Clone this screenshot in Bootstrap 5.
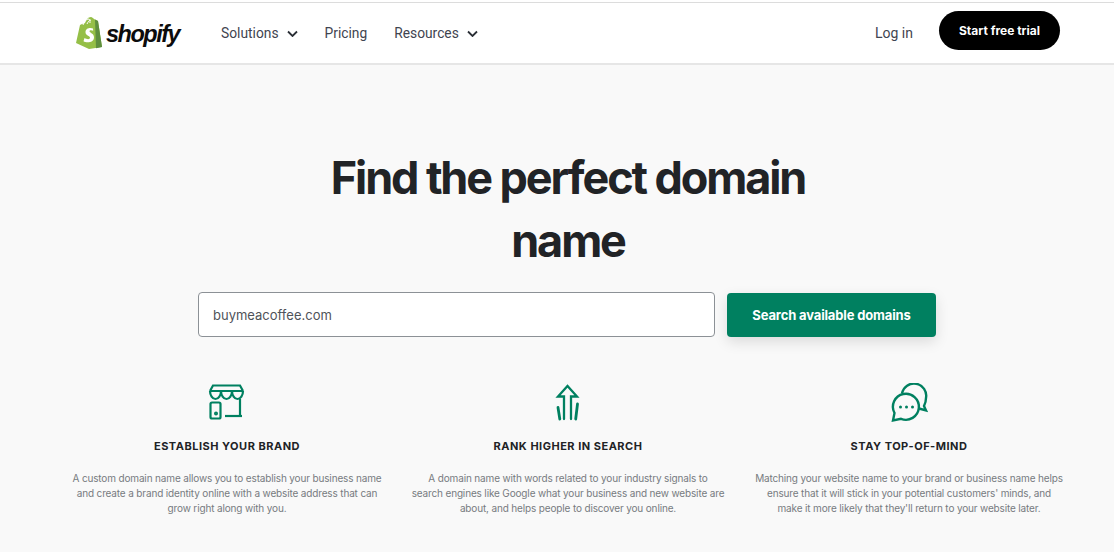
<!DOCTYPE html>
<html lang="en">
<head>
  <meta charset="UTF-8" />
  <meta name="viewport" content="width=device-width, initial-scale=1">
  <title>Find the perfect domain name - Shopify</title>
  <link href="https://cdn.jsdelivr.net/npm/bootstrap@5.3.0/dist/css/bootstrap.min.css" rel="stylesheet">
  <style>
    body {
      background: #f9f9f9;
      font-family: "Inter", "Liberation Sans", sans-serif;
      color: #212326;
      height: 552px;
      overflow: hidden;
    }
    .top-line {
      height: 3px;
      background: #fff;
      border-bottom: 1px solid #dcdcdc;
    }
    .site-header {
      height: 62px;
      background: #fff;
      border-bottom: 2px solid #e6e6e6;
      padding: 0 54px 0 75px;
    }
    .brand-box {
      width: 146px;
      gap: 3px;
      text-decoration: none;
    }
    .brand-word {
      font-family: "Liberation Sans", sans-serif;
      font-weight: 700;
      font-style: italic;
      font-size: 23.5px;
      letter-spacing: -1.5px;
      color: #0c0c0c;
      line-height: 1;
      margin-top: 3px;
    }
    .site-nav {
      gap: 27px;
      font-family: "Roboto", sans-serif;
      font-size: 13.8px;
      margin-top: 1px;
    }
    .site-nav a, .login-link {
      color: #3f4450;
      text-decoration: none;
    }
    .login-link {
      font-family: "Roboto", sans-serif;
      font-size: 14px;
      margin-right: 26px;
      margin-top: 1px;
    }
    .trial-btn {
      width: 121px;
      height: 39px;
      border-radius: 20px;
      background: #000;
      color: #fff;
      font-size: 12px;
      font-weight: 700;
      border: 0;
      padding: 0;
      margin-bottom: 5px;
    }
    .hero-title {
      font-family: "Inter", sans-serif;
      font-weight: 700;
      font-size: 45px;
      line-height: 63px;
      letter-spacing: -2.1px;
      width: 520px;
      margin: 81px 0 0 308px;
      color: #212326;
    }
    .search-row {
      width: 738px;
      margin: 20px auto 0 198px;
      gap: 12px;
      align-items: center;
    }
    .domain-input {
      width: 517px;
      height: 45px;
      border: 1px solid #8c9196;
      border-radius: 4px;
      background: #fff;
      padding: 0 14px;
      font-family: "Inter", sans-serif;
      font-size: 13px;
      color: #4f5359;
    }
    .search-btn {
      width: 209px;
      height: 44px;
      background: #008060;
      color: #fff;
      border: 0;
      border-radius: 4px;
      font-size: 13px;
      font-weight: 700;
      letter-spacing: -0.15px;
      padding: 2px 0 0;
      box-shadow: 0 5px 14px rgba(0, 0, 0, .12);
    }
    .feature-row {
      margin: 46px 0 0 70px;
      gap: 27px;
    }
    .feature-item {
      width: 314px;
      text-align: center;
    }
    .feature-icon {
      display: block;
      width: 40px;
      height: 40px;
      margin: 0 auto;
    }
    .feature-title {
      font-size: 11px;
      font-weight: 700;
      letter-spacing: 0.5px;
      line-height: 14px;
      margin: 16px 0 18px;
      color: #212326;
    }
    .feature-text {
      font-size: 10px;
      letter-spacing: -0.15px;
      line-height: 15px;
      color: #777b80;
      margin: 0;
    }
  </style>
</head>
<body>

<div class="top-line"></div>
<header class="site-header d-flex align-items-center">
  <a class="brand-box d-flex align-items-center" href="#">
    <svg width="28" height="32" viewBox="0 0 28 32" aria-hidden="true">
      <path d="M1 26 5 8c2-1 4-1.500 5-2 1-3 3-6 6-6 1 0 2 1 3 2l2 1 2 1 4 26-13 2z" fill="#95bf47"/>
      <path d="M20 2.500l1 .5 2 1 4 26-6 1.200z" fill="#5e8e3e"/>
      <path d="M8 8c1-3 3-6 6-6M12 7c1-2 2-4 4-4M15 6c0-2 0-3-1-4" fill="none" stroke="#fff" stroke-width="1"/>
      <path d="M18 11.500c-1.500-.7-7.500-1.200-7.500 3.800 0 3.500 4.500 3.500 4.500 5.500 0 2-3.500 1.500-5.500.3l-1 3.200c2.500 1.700 10.500 2 10.500-4 0-4-4.500-4.300-4.500-6 0-1.300 2.200-1.200 3.700-.5z" fill="#fff"/>
    </svg>
    <span class="brand-word">shopify</span>
  </a>
  <nav class="site-nav d-flex align-items-center">
    <a class="d-flex align-items-center" href="#">Solutions
      <svg class="ms-2" width="11" height="7" viewBox="0 0 11 7" aria-hidden="true"><path d="M1 1.500 5.500 6 10 1.500" fill="none" stroke="#2b2f36" stroke-width="1.800"/></svg>
    </a>
    <a href="#">Pricing</a>
    <a class="d-flex align-items-center" href="#">Resources
      <svg class="ms-2" width="11" height="7" viewBox="0 0 11 7" aria-hidden="true"><path d="M1 1.500 5.500 6 10 1.500" fill="none" stroke="#2b2f36" stroke-width="1.800"/></svg>
    </a>
  </nav>
  <a class="login-link ms-auto" href="#">Log in</a>
  <button class="trial-btn" type="button">Start free trial</button>
</header>

<main>
  <h1 class="hero-title text-center">Find the perfect domain name</h1>

  <form class="search-row d-flex" onsubmit="return false">
    <input class="domain-input" type="text" value="buymeacoffee.com" aria-label="Domain name">
    <button class="search-btn" type="submit">Search available domains</button>
  </form>

  <section class="feature-row d-flex">
    <div class="feature-item">
      <svg class="feature-icon" viewBox="0 0 40 40" fill="none" stroke="#008060" stroke-width="2.200" aria-hidden="true">
        <path d="M3 8 6 2.500H33L36 8M3 8H36"/>
        <path d="M3 8a5.500 8 0 0 0 11 0a5.500 8 0 0 0 11 0a5.500 8 0 0 0 11 0"/>
        <path d="M33 16V33"/>
        <path d="M35 33H18"/>
        <rect x="3.500" y="19.500" width="10" height="16" rx="1.500"/>
        <circle cx="9" cy="30.500" r=".9"/>
      </svg>
      <h2 class="feature-title">ESTABLISH YOUR BRAND</h2>
      <p class="feature-text">A custom domain name allows you to establish your business name and create a brand identity online with a website address that can grow right along with you.</p>
    </div>
    <div class="feature-item">
      <svg class="feature-icon" viewBox="0 0 40 40" fill="none" stroke="#008060" stroke-linecap="round" aria-hidden="true">
        <path d="M16 36V13.500H10L19.500 3l9.500 10.500H23V36" stroke-width="2.300" stroke-linejoin="miter"/>
        <path d="M10 24.500l1.800 11.500M29.500 21l-1.800 15" stroke-width="2.800"/>
      </svg>
      <h2 class="feature-title">RANK HIGHER IN SEARCH</h2>
      <p class="feature-text">A domain name with words related to your industry signals to<br>search engines like Google what your business and new website are<br>about, and helps people to discover you online.</p>
    </div>
    <div class="feature-item">
      <svg class="feature-icon" viewBox="0 0 40 40" fill="none" stroke="#008060" stroke-width="2.400" aria-hidden="true">
        <path d="M5.500 30A13 13 0 1 1 12 35.800L4 37.500z"/>
        <path d="M13 10.500A12 12 0 0 1 37 15c0 3-1 6-2 8l2 4.500-7-2"/>
        <circle cx="11.500" cy="24" r="1.500" fill="#008060" stroke="none"/>
        <circle cx="17.500" cy="24" r="1.500" fill="#008060" stroke="none"/>
        <circle cx="23.500" cy="24" r="1.500" fill="#008060" stroke="none"/>
      </svg>
      <h2 class="feature-title">STAY TOP-OF-MIND</h2>
      <p class="feature-text">Matching your website name to your brand or business name helps<br>ensure that it will stick in your potential customers' minds, and<br>make it more likely that they'll return to your website later.</p>
    </div>
  </section>
</main>

<script src="https://cdn.jsdelivr.net/npm/bootstrap@5.3.0/dist/js/bootstrap.bundle.min.js"></script>
</body>
</html>
